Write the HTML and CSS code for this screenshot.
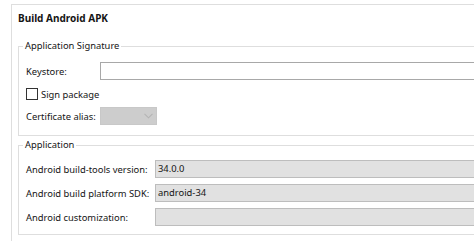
FILE: index.html
```html
<!DOCTYPE html>
<html>
<head>
<meta charset="utf-8">
<link rel="stylesheet" href="styles.css">
</head>
<body>
<div class="panel">
  <div class="title">Build Android APK</div>
  <fieldset class="group sig">
    <legend>Application Signature</legend>
    <div class="row r1">
      <label class="lbl">Keystore:</label>
      <div class="input"></div>
    </div>
    <div class="row r2 check-row">
      <span class="checkbox"></span>
      <span>Sign package</span>
    </div>
    <div class="row r3">
      <label class="lbl">Certificate alias:</label>
      <div class="combo">
        <svg class="chev" width="9" height="6" viewBox="0 0 9 6"><path d="M0.5 0.8 L4.5 4.8 L8.5 0.8" fill="none" stroke="#b4b4b4" stroke-width="1.1"/></svg>
      </div>
    </div>
  </fieldset>
  <fieldset class="group app">
    <legend>Application</legend>
    <div class="row">
      <label class="lbl">Android build-tools version:</label>
      <div class="input disabled">34.0.0</div>
    </div>
    <div class="row">
      <label class="lbl">Android build platform SDK:</label>
      <div class="input disabled">android-34</div>
    </div>
    <div class="row">
      <label class="lbl">Android customization:</label>
      <div class="input disabled"></div>
    </div>
  </fieldset>
</div>
</body>
</html>
```

FILE: styles.css
```css
html, body {
  margin: 0;
  padding: 0;
  background: #ffffff;
}
body {
  font-family: "Noto Sans", "Open Sans", sans-serif;
  font-size: 9.4px;
  color: #151515;
  overflow: hidden;
  height: 241px;
}
.panel {
  margin: 4px 0 0 11px;
  border: 1px solid #dedede;
  border-right: none;
  border-bottom: none;
  padding: 6px 0 20px 6px;
  height: 300px;
}
.title {
  font-weight: bold;
  font-size: 10px;
  padding-left: 0;
  line-height: 14px;
  margin-bottom: 14px;
}
.group {
  margin: 0;
  border: 1px solid #dedede;
  border-right: none;
  padding: 7px 0 7px 7px;
  min-width: 0;
}
.group legend {
  padding: 0 2px;
  margin-left: -3px;
  line-height: 14px;
  height: 14px;
}
.sig {
  padding-bottom: 9px;
  margin-bottom: 2px;
}
.app {
  padding-top: 5px;
  padding-bottom: 5px;
}
.row {
  display: flex;
  align-items: center;
  white-space: nowrap;
}
.lbl {
  flex-shrink: 0;
}
.r1 { height: 22px; }
.r2 { height: 24px; }
.r3 { height: 20px; }
.app .row { height: 24px; }
.sig .lbl { width: 74px; }
.app .lbl { width: 129px; }
.input {
  flex: 1;
  box-sizing: border-box;
  height: 18px;
  border: 1px solid #a8a8a8;
  border-right: none;
  background: #fff;
  line-height: 16px;
  padding-left: 2px;
}
.input.disabled {
  background: #e1e1e1;
  border-color: #bdbdbd;
}
.check-row {
  gap: 3px;
}
.checkbox {
  box-sizing: border-box;
  width: 12px;
  height: 12px;
  border: 1px solid #333;
  background: #fff;
  flex-shrink: 0;
}
.combo {
  box-sizing: border-box;
  width: 57px;
  height: 18px;
  border: 1px solid #c8c8c8;
  background: #cdcdcd;
  display: flex;
  align-items: center;
  justify-content: flex-end;
  padding-right: 3px;
}
.chev { display: block; }
```
